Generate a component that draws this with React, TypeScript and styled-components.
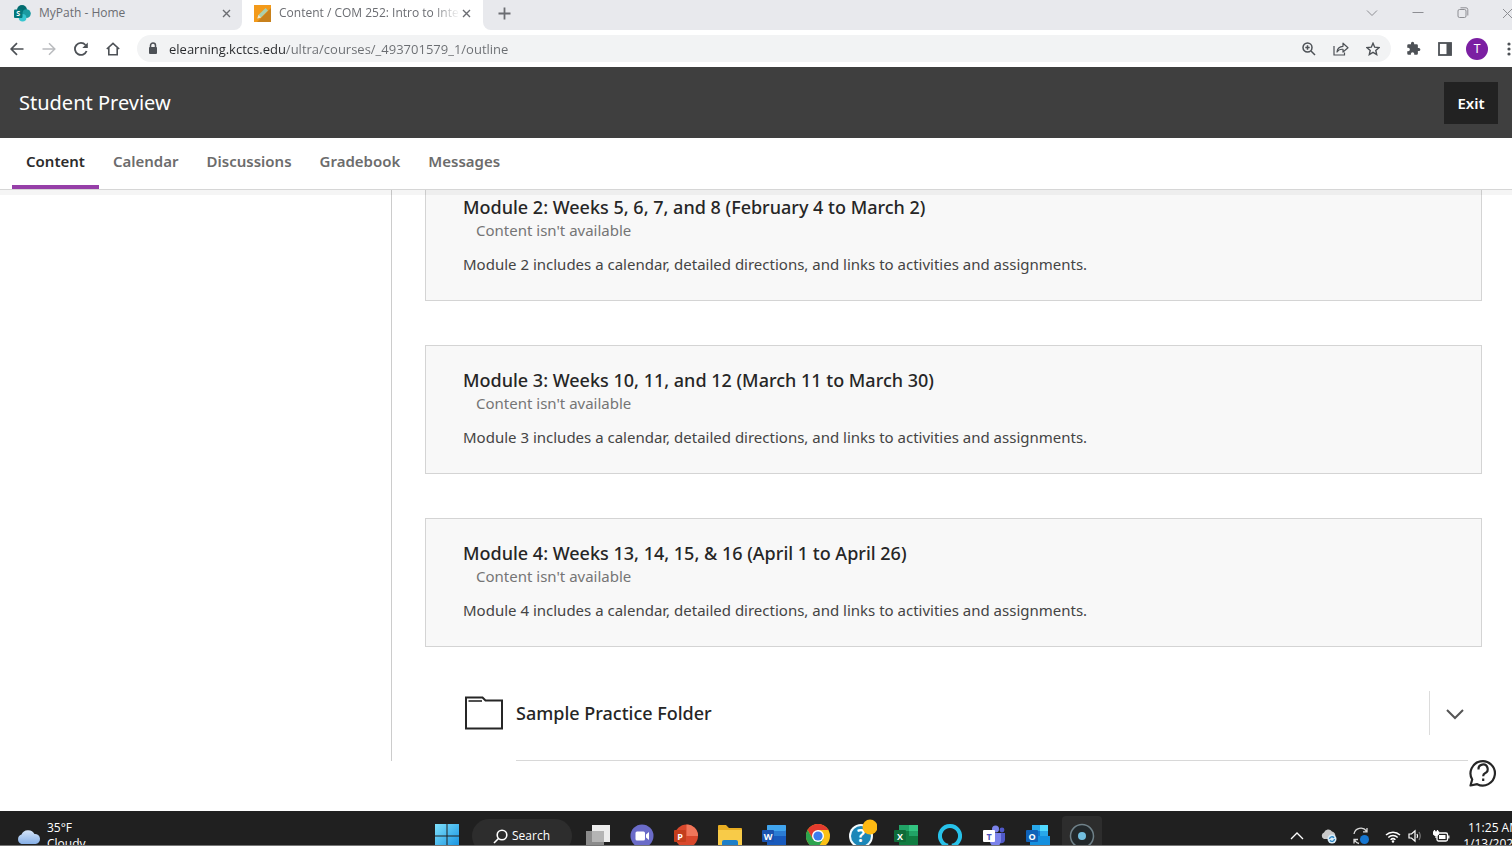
import React from "react";
import styled, { createGlobalStyle } from "styled-components";

const pageFont = '"Noto Sans", "Open Sans", sans-serif';
const systemFont = '"Open Sans", "Noto Sans", sans-serif';

const GlobalStyle = createGlobalStyle`
  * { box-sizing: border-box; }
  body { margin: 0; background: #fff; font-family: ${pageFont}; overflow: hidden; }
  h1, h2, p, ul { margin: 0; padding: 0; }
  ul { list-style: none; }
  button { border: 0; padding: 0; background: none; font: inherit; color: inherit; cursor: pointer; }
  svg { display: block; flex: none; }
`;

const Screen = styled.div`
  display: flex;
  flex-direction: column;
  height: 100vh;
  overflow: hidden;
`;

/* ---------- browser chrome ---------- */

const TabStrip = styled.div`
  display: flex;
  flex: none;
  height: 30px;
  background: #fff;
  color: #6b6d72;
  font-family: ${systemFont};
  font-size: 12px;
`;

const Tab = styled.div<{ $active?: boolean }>`
  display: flex;
  align-items: center;
  width: ${(p) => (p.$active ? 241 : 242)}px;
  height: 30px;
  padding: 0 11px 4px ${(p) => (p.$active ? 12 : 14)}px;
  background: ${(p) => (p.$active ? "#fff" : "#e8e9ed")};
  border-bottom-right-radius: ${(p) => (p.$active ? 0 : 8)}px;
`;

const TabTitle = styled.span<{ $fade?: boolean }>`
  flex: 1;
  min-width: 0;
  margin: 0 0 0 8px;
  overflow: hidden;
  white-space: nowrap;
  line-height: 16px;
  ${(p) => p.$fade && "mask-image: linear-gradient(to right, #000 85%, transparent);"}
`;

const StripRest = styled.div`
  display: flex;
  flex: 1;
  justify-content: space-between;
  align-items: center;
  min-width: 0;
  height: 30px;
  padding: 0 0 4px 12px;
  overflow: hidden;
  background: #e8e9ed;
  border-bottom-left-radius: 8px;
`;

const WindowControls = styled.div`
  display: flex;
  flex: none;
  margin-right: -18px;
  color: #8d8e93;
`;

const IconButton = styled.button<{ $w: number }>`
  display: flex;
  flex: none;
  align-items: center;
  justify-content: center;
  width: ${(p) => p.$w}px;
  height: 24px;
`;

const Toolbar = styled.div`
  display: flex;
  flex: none;
  align-items: center;
  height: 37px;
  padding-left: 1px;
  overflow: hidden;
  color: #4d5156;
  background: #fff;
`;

const AddressBar = styled.label`
  display: flex;
  flex: 1;
  align-items: center;
  min-width: 0;
  height: 27px;
  margin: 0 6px 0 8px;
  padding: 0 2px 0 10px;
  background: #f2f3f4;
  border-radius: 14px;
`;

const AddressInput = styled.input`
  flex: 1;
  min-width: 0;
  height: 24px;
  margin-left: 11px;
  padding: 0;
  border: 0;
  outline: 0;
  color: transparent;
  background: linear-gradient(to right, #26282b 117px, #6a6d71 117px);
  background-clip: text;
  font-family: ${systemFont};
  font-size: 13px;
`;

const ToolbarEnd = styled.div`
  display: flex;
  flex: none;
  margin-right: -13px;
`;

const Avatar = styled.span`
  display: flex;
  align-items: center;
  justify-content: center;
  width: 22px;
  height: 22px;
  border-radius: 50%;
  background: #7b1fa2;
  color: #fff;
  font-family: Roboto, sans-serif;
  font-size: 12px;
`;

/* ---------- course page ---------- */

const PreviewBar = styled.header`
  display: flex;
  flex: none;
  align-items: center;
  justify-content: space-between;
  height: 71px;
  padding: 0 14px 0 19px;
  background: #3f3f3f;
  color: #fff;
`;

const PreviewTitle = styled.h1`
  font-size: 20px;
  font-weight: 400;
  line-height: 28px;
`;

const ExitButton = styled.button`
  width: 54px;
  height: 42px;
  background: #222;
  font-size: 15px;
  font-weight: 600;
`;

const CourseNav = styled.nav`
  position: relative;
  z-index: 1;
  display: flex;
  flex: none;
  height: 52px;
  padding-left: 12px;
  background: #fff;
  border-bottom: 1px solid #d6d6d6;
  box-shadow: 0 5px 0 rgba(0, 0, 0, 0.04);
`;

const NavLink = styled.a<{ $active?: boolean }>`
  height: 51px;
  padding: 12px 14px 0;
  border-bottom: 4px solid ${(p) => (p.$active ? "#963fa8" : "transparent")};
  color: ${(p) => (p.$active ? "#2c2c2c" : "#6c6c6c")};
  font-size: 15px;
  font-weight: 600;
  line-height: 22px;
  text-decoration: none;
`;

const Main = styled.main`
  position: relative;
  flex: 1;
  min-height: 0;
  overflow: hidden;
  background: #fff;
`;

const Columns = styled.div`
  display: flex;
`;

const SidePanel = styled.aside`
  flex: none;
  width: 392px;
  border-right: 1px solid #ccc;
`;

const Outline = styled.ul`
  display: flex;
  flex: 1;
  flex-direction: column;
  gap: 44px;
  min-width: 0;
  margin-top: -18px;
  padding: 0 30px 0 33px;
`;

const ModuleCard = styled.li`
  padding: 22px 37px 24px;
  border: 1px solid #d4d4d4;
  background: #f8f8f8;
`;

const ItemTitle = styled.h2`
  color: #262626;
  font-size: 18px;
  font-weight: 500;
  line-height: 24px;
`;

const Availability = styled.p`
  padding-left: 13px;
  color: #757575;
  font-size: 15px;
  line-height: 22px;
`;

const Description = styled.p`
  margin-top: 11px;
  color: #444;
  font-size: 15px;
  line-height: 24px;
`;

const FolderRow = styled.li`
  display: flex;
  align-items: center;
  gap: 12px;
  margin-top: -26px;
  padding-left: 40px;
`;

const FolderBody = styled.div`
  display: flex;
  flex: 1;
  align-items: center;
  justify-content: space-between;
  height: 96px;
  border-bottom: 1px solid #d8d8d8;
`;

const ExpandButton = styled.button`
  display: flex;
  align-items: center;
  justify-content: center;
  width: 53px;
  height: 44px;
  padding: 2px 2px 0 0;
  border-left: 1px solid #dcdcdc;
`;

const HelpButton = styled.button`
  position: absolute;
  right: 14px;
  bottom: 23px;
  width: 30px;
  height: 30px;
  background: #fff;
`;

/* ---------- taskbar ---------- */

const Taskbar = styled.footer`
  flex: none;
  height: 35px;
  overflow: hidden;
  background: #202020;
  border-bottom: 1px solid #777;
  color: #fff;
  font-family: ${systemFont};
  font-size: 12px;
  line-height: 16px;
`;

const TaskbarRow = styled.div`
  display: grid;
  grid-template-columns: minmax(0, 1fr) auto minmax(0, 1fr);
  align-items: center;
  height: 50px;
  padding-left: 16px;
`;

const Weather = styled.div`
  display: flex;
  align-items: center;
  gap: 6px;
`;

const Apps = styled.div`
  display: flex;
  align-items: center;
`;

const AppButton = styled.button<{ $active?: boolean }>`
  display: flex;
  align-items: center;
  justify-content: center;
  width: 40px;
  height: 40px;
  margin: 0 2px;
  border-radius: 4px;
  background: ${(p) => (p.$active ? "#2d2d2d" : "transparent")};
`;

const SearchButton = styled.button`
  display: flex;
  align-items: center;
  justify-content: center;
  gap: 4px;
  width: 100px;
  height: 34px;
  margin: 0 4px 0 3px;
  border-radius: 17px;
  background: #2d2d2d;
`;

const Tray = styled.div`
  display: flex;
  align-items: center;
  justify-content: flex-end;
  overflow: hidden;
`;

const TraySlot = styled.span<{ $w: number }>`
  display: flex;
  flex: none;
  justify-content: center;
  width: ${(p) => p.$w}px;
`;

const Clock = styled.time`
  display: flex;
  flex: none;
  flex-direction: column;
  align-items: flex-end;
  margin: 0 -8px 0 2px;
  white-space: nowrap;
`;

/* ---------- drawings ---------- */

type LineIconProps = {
  w: number;
  h?: number;
  sw?: number;
  color?: string;
  children: React.ReactNode;
};

const LineIcon = ({ w, h = w, sw = 1.5, color = "currentColor", children }: LineIconProps) => (
  <svg width={w} height={h} viewBox={`0 0 ${w} ${h}`} fill="none" stroke={color} strokeWidth={sw} aria-hidden="true">
    {children}
  </svg>
);

const CloseIcon = ({ size = 9 }: { size?: number }) => (
  <LineIcon w={size} sw={1.4}>
    <path d={`M1 1 L${size - 1} ${size - 1} M${size - 1} 1 L1 ${size - 1}`} />
  </LineIcon>
);

const SharePointIcon = () => (
  <svg width="17" height="17" viewBox="0 0 17 17" aria-hidden="true">
    <circle cx="8" cy="5" r="5" fill="#036c70" />
    <circle cx="12.4" cy="8.6" r="4.4" fill="#1a9ba1" />
    <circle cx="8.6" cy="12.8" r="3.8" fill="#37c6d0" />
    <rect x="0" y="4.5" width="8.5" height="8.5" rx="1" fill="#03787c" />
    <text x="4.2" y="11.4" fontSize="7" fontWeight="700" textAnchor="middle" fill="#fff">S</text>
  </svg>
);

const CourseIcon = () => (
  <svg width="17" height="17" viewBox="0 0 17 17" aria-hidden="true">
    <rect width="17" height="17" fill="#f39a1a" />
    <path d="M17 3 V17 H3 Z" fill="#c8811c" />
    <path d="M3.4 13.6 L4.4 10 L11.6 3 L14 5.4 L7 12.6 Z" fill="#a9cfae" />
    <path d="M3.4 13.6 L4.4 10 L7 12.6 Z" fill="#f4e6c8" />
  </svg>
);

const CloudIcon = () => (
  <svg width="25" height="17" viewBox="0 0 24 17" aria-hidden="true">
    <defs>
      <linearGradient id="cloud" x1="0" y1="0" x2="0" y2="1">
        <stop offset="0" stopColor="#d5e4f8" />
        <stop offset="1" stopColor="#86b0e8" />
      </linearGradient>
    </defs>
    <path d="M5 16 A5 5 0 0 1 5 6.500 A7 6.500 0 0 1 18 6 A5 5 0 0 1 19 16 Z" fill="url(#cloud)" />
  </svg>
);

const WindowsIcon = () => (
  <svg width="24" height="24" viewBox="0 0 24 24" aria-hidden="true">
    <defs>
      <linearGradient id="win" x1="0" y1="0" x2="1" y2="1">
        <stop offset="0" stopColor="#7ee0fb" />
        <stop offset="1" stopColor="#1390e0" />
      </linearGradient>
    </defs>
    <path d="M0 0 H11.500 V11.500 H0 Z M12.500 0 H24 V11.500 H12.500 Z M0 12.500 H11.500 V24 H0 Z M12.500 12.500 H24 V24 H12.500 Z" fill="url(#win)" />
  </svg>
);

const TaskViewIcon = () => (
  <svg width="24" height="24" viewBox="0 0 24 24" aria-hidden="true">
    <rect x="6" y="1" width="18" height="17" fill="#ececec" />
    <rect x="0" y="7" width="18" height="17" fill="#8b8b8b" />
    <rect x="6" y="7" width="12" height="11" fill="#b4b4b4" />
  </svg>
);

const MeetIcon = () => (
  <svg width="24" height="24" viewBox="0 0 24 24" aria-hidden="true">
    <circle cx="12" cy="12" r="11.500" fill="#6a6bc8" />
    <rect x="5.500" y="7.500" width="9.500" height="9" rx="1.500" fill="#fff" />
    <path d="M16 10.500 L19 8 V16 L16 13.500 Z" fill="#fff" />
  </svg>
);

const PowerPointIcon = () => (
  <svg width="24" height="24" viewBox="0 0 24 24" aria-hidden="true">
    <circle cx="12.500" cy="12" r="11.500" fill="#d9482c" />
    <path d="M12.500 0.500 A11.500 11.500 0 0 1 24 12 H12.500 Z" fill="#f0765a" />
    <rect x="0" y="6" width="12" height="12" rx="1" fill="#c43e1c" />
    <text x="6" y="15.500" fontSize="9" fontWeight="700" textAnchor="middle" fill="#fff">P</text>
  </svg>
);

const ExplorerIcon = () => (
  <svg width="26" height="24" viewBox="0 0 26 24" aria-hidden="true">
    <path d="M1 2 Q1 1 2 1 H9 L12 4 H24 Q25 4 25 5 V22 H1 Z" fill="#e9ae22" />
    <path d="M1 6 H25 V23 H1 Z" fill="#f8cb48" />
    <path d="M5 23 V18 Q5 16 7 16 H19 Q21 16 21 18 V23 Z" fill="#1d7fc9" />
  </svg>
);

const WordIcon = () => (
  <svg width="24" height="24" viewBox="0 0 24 24" aria-hidden="true">
    <rect x="5" y="1" width="19" height="22" rx="1" fill="#185abd" />
    <rect x="5" y="1" width="19" height="6" rx="1" fill="#41a5ee" />
    <rect x="5" y="7" width="19" height="5" fill="#2b7cd3" />
    <rect x="0" y="6" width="12" height="12" rx="1" fill="#1a53b0" />
    <text x="6" y="15.500" fontSize="9" fontWeight="700" textAnchor="middle" fill="#fff">W</text>
  </svg>
);

const ChromeIcon = () => (
  <svg width="24" height="24" viewBox="0 0 24 24" aria-hidden="true">
    <circle cx="12" cy="12" r="12" fill="#fbc116" />
    <path d="M12 6 H22.400 A12 12 0 0 0 1.600 6 L6.800 15 Z" fill="#e33b2e" />
    <path d="M1.600 6 A12 12 0 0 0 12 24 L17.200 15 L12 12 L6.800 15 Z" fill="#2da44e" />
    <circle cx="12" cy="12" r="6" fill="#fff" />
    <circle cx="12" cy="12" r="4.600" fill="#3b7ded" />
  </svg>
);

const HelpAppIcon = () => (
  <svg width="30" height="34" viewBox="0 0 30 34" aria-hidden="true">
    <circle cx="14" cy="17" r="12" fill="#f4fbfe" />
    <circle cx="14" cy="17" r="10" fill="#1b87b8" />
    <text x="14" y="23" fontSize="17" fontWeight="700" textAnchor="middle" fill="#fff">?</text>
    <circle cx="23" cy="8" r="7.500" fill="#fdb913" />
  </svg>
);

const ExcelIcon = () => (
  <svg width="24" height="24" viewBox="0 0 24 24" aria-hidden="true">
    <rect x="5" y="1" width="19" height="22" rx="1" fill="#107c41" />
    <rect x="5" y="1" width="10" height="6" fill="#21a366" />
    <rect x="15" y="1" width="9" height="6" fill="#33c481" />
    <rect x="15" y="7" width="9" height="5" fill="#21a366" />
    <rect x="0" y="6" width="12" height="12" rx="1" fill="#0e6b38" />
    <text x="6" y="15.500" fontSize="9" fontWeight="700" textAnchor="middle" fill="#fff">X</text>
  </svg>
);

const AlexaIcon = () => (
  <svg width="24" height="24" viewBox="0 0 24 24" fill="none" aria-hidden="true">
    <path d="M10 21.800 A10 10 0 1 1 14 21.800" stroke="#27c2ea" strokeWidth="4" />
  </svg>
);

const TeamsIcon = () => (
  <svg width="24" height="24" viewBox="0 0 24 24" aria-hidden="true">
    <circle cx="13.500" cy="5" r="3.500" fill="#7b83eb" />
    <circle cx="20" cy="6" r="2.400" fill="#5059c9" />
    <path d="M15 9 H23 V16 Q22 20 18 19 Z" fill="#5059c9" />
    <path d="M8 9 H19 V17 Q18 23 13 23 Q9 22 8 18 Z" fill="#7b83eb" />
    <rect x="1" y="6" width="12" height="12" rx="1" fill="#fff" />
    <text x="7" y="15.500" fontSize="9" fontWeight="700" textAnchor="middle" fill="#4b53bc">T</text>
  </svg>
);

const OutlookIcon = () => (
  <svg width="24" height="24" viewBox="0 0 24 24" aria-hidden="true">
    <rect x="6" y="1" width="16" height="20" rx="1" fill="#0f78d4" />
    <rect x="6" y="1" width="8" height="6" fill="#28a8ea" />
    <rect x="14" y="1" width="8" height="6" fill="#50d9ff" />
    <rect x="14" y="7" width="8" height="6" fill="#28a8ea" />
    <path d="M4 12 L24 12 V23 H4 Z" fill="#1490df" />
    <rect x="0" y="6" width="12" height="12" rx="1" fill="#0f62b8" />
    <text x="6" y="15.500" fontSize="9" fontWeight="700" textAnchor="middle" fill="#fff">O</text>
  </svg>
);

const RecorderIcon = () => (
  <svg width="26" height="26" viewBox="0 0 26 26" aria-hidden="true">
    <circle cx="13" cy="13" r="11.500" fill="#22282b" stroke="#6f8189" strokeWidth="1.500" />
    <circle cx="13" cy="13" r="4" fill="#72bfe0" />
  </svg>
);

const FolderIcon = () => (
  <LineIcon w={39} h={35} sw={2} color="#262626">
    <path d="M1 1.500 H17.500 L20.500 4.500 H37 V32.500 H1 Z" />
    <path d="M3.500 5 H17" strokeWidth={1.6} />
  </LineIcon>
);

const HelpIcon = () => (
  <LineIcon w={30} sw={2.2} color="#262626">
    <path d="M2.500 27.500 L4.200 21.500 A12.200 12.200 0 1 1 9.200 26.200 Z" strokeLinejoin="round" />
    <path d="M10.500 11.500 A4.600 4.600 0 1 1 17 15.300 Q15.200 16.200 15.200 18.200" />
    <path d="M15.200 20.500 V23" />
  </LineIcon>
);

/* ---------- page data ---------- */

const modules = [
  { n: 2, title: "Module 2: Weeks 5, 6, 7, and 8 (February 4 to March 2)" },
  { n: 3, title: "Module 3: Weeks 10, 11, and 12 (March 11 to March 30)" },
  { n: 4, title: "Module 4: Weeks 13, 14, 15, & 16 (April 1 to April 26)" },
];

const navItems = ["Content", "Calendar", "Discussions", "Gradebook", "Messages"];

const pinnedApps = [
  { name: "Task view", Icon: TaskViewIcon },
  { name: "Chat", Icon: MeetIcon },
  { name: "PowerPoint", Icon: PowerPointIcon },
  { name: "File Explorer", Icon: ExplorerIcon },
  { name: "Word", Icon: WordIcon },
  { name: "Chrome", Icon: ChromeIcon },
  { name: "Help", Icon: HelpAppIcon },
  { name: "Excel", Icon: ExcelIcon },
  { name: "Alexa", Icon: AlexaIcon },
  { name: "Teams", Icon: TeamsIcon },
  { name: "Outlook", Icon: OutlookIcon },
  { name: "Recorder", Icon: RecorderIcon, active: true },
];

const BrowserTabs = () => (
  <TabStrip>
    <Tab>
      <SharePointIcon />
      <TabTitle>MyPath - Home</TabTitle>
      <IconButton $w={10} aria-label="Close MyPath tab"><CloseIcon /></IconButton>
    </Tab>
    <Tab $active>
      <CourseIcon />
      <TabTitle $fade>Content / COM 252: Intro to Inte</TabTitle>
      <IconButton $w={12} aria-label="Close Content tab"><CloseIcon /></IconButton>
    </Tab>
    <StripRest>
      <IconButton $w={18} aria-label="New tab">
        <LineIcon w={13} sw={1.8}><path d="M6.500 0.500 V12.500 M0.500 6.500 H12.500" /></LineIcon>
      </IconButton>
      <WindowControls>
        <IconButton $w={46} aria-label="Search tabs">
          <LineIcon w={12} h={8} sw={1}><path d="M1 1.500 L6 6.500 L11 1.500" /></LineIcon>
        </IconButton>
        <IconButton $w={45} aria-label="Minimize">
          <LineIcon w={12} sw={1}><path d="M0.500 5.500 H11.500" /></LineIcon>
        </IconButton>
        <IconButton $w={45} aria-label="Restore">
          <LineIcon w={12} sw={1}>
            <rect x="1" y="2.500" width="8" height="8" rx="1.500" />
            <path d="M3.500 0.800 H9 Q10.800 0.800 10.800 2.600 V8.500" />
          </LineIcon>
        </IconButton>
        <IconButton $w={45} aria-label="Close window">
          <LineIcon w={11} sw={1}><path d="M1 1 L10 10 M10 1 L1 10" /></LineIcon>
        </IconButton>
      </WindowControls>
    </StripRest>
  </TabStrip>
);

const BrowserToolbar = () => (
  <Toolbar>
    <IconButton $w={32} aria-label="Back">
      <LineIcon w={14} sw={1.7}><path d="M13.500 7 H1.500 M7 1.200 L1.200 7 L7 12.800" /></LineIcon>
    </IconButton>
    <IconButton $w={32} aria-label="Forward">
      <LineIcon w={14} sw={1.5} color="#b9bbbe"><path d="M0.500 7 H12.500 M7 1.200 L12.800 7 L7 12.800" /></LineIcon>
    </IconButton>
    <IconButton $w={32} aria-label="Reload">
      <LineIcon w={14} sw={1.8}>
        <path d="M12.600 9 A6 6 0 1 1 11.500 3" />
        <path d="M13.800 0.500 V6 H8.300 Z" fill="currentColor" stroke="none" />
      </LineIcon>
    </IconButton>
    <IconButton $w={32} aria-label="Home">
      <LineIcon w={14} sw={1.6}><path d="M0.800 7 L7 1.400 L13.200 7 M2.800 5.500 V12.800 H11.200 V5.500" /></LineIcon>
    </IconButton>
    <AddressBar>
      <LineIcon w={11} h={13} sw={1.5}>
        <path d="M3.500 6 V3.500 A2.500 2.500 0 0 1 8.500 3.500 V6" />
        <rect x="2" y="5" width="8" height="7" rx="1" fill="currentColor" stroke="none" />
      </LineIcon>
      <AddressInput aria-label="Address" defaultValue="elearning.kctcs.edu/ultra/courses/_493701579_1/outline" />
      <IconButton $w={32} aria-label="Zoom">
        <LineIcon w={14}>
          <circle cx="5.500" cy="5.500" r="4.500" />
          <path d="M9 9 L13 13 M3.300 5.500 H7.700 M5.500 3.300 V7.700" />
        </LineIcon>
      </IconButton>
      <IconButton $w={32} aria-label="Share">
        <LineIcon w={16} h={14} sw={1.2}>
          <path d="M1 4 V13 H11.500 V10.500" />
          <path d="M4 10 Q4.500 4.500 10 4.300 V1.200 L15 5.800 L10 10 V7.300 Q6 7 4 10 Z" strokeLinejoin="round" />
        </LineIcon>
      </IconButton>
      <IconButton $w={32} aria-label="Bookmark">
        <LineIcon w={14} sw={1.4}>
          <path d="M7 1.300 L8.700 5.200 L13 5.600 L9.800 8.400 L10.700 12.600 L7 10.400 L3.300 12.600 L4.200 8.400 L1 5.600 L5.300 5.200 Z" />
        </LineIcon>
      </IconButton>
    </AddressBar>
    <ToolbarEnd>
      <IconButton $w={32} aria-label="Extensions">
        <svg width="15" height="15" viewBox="0 0 24 24" fill="currentColor" aria-hidden="true">
          <path d="M20.500 11 H19 V7 a2 2 0 0 0 -2 -2 h-4 V3.500 a2.500 2.500 0 0 0 -5 0 V5 H4 a2 2 0 0 0 -2 2 v3.800 h1.500 a2.700 2.700 0 0 1 0 5.400 H2 V20 a2 2 0 0 0 2 2 h3.800 v-1.500 a2.700 2.700 0 0 1 5.400 0 V22 H17 a2 2 0 0 0 2 -2 v-4 h1.500 a2.500 2.500 0 0 0 0 -5 Z" />
        </svg>
      </IconButton>
      <IconButton $w={32} aria-label="Side panel">
        <LineIcon w={14} sw={1.8}>
          <rect x="1" y="1" width="12" height="12" />
          <rect x="8.500" y="1" width="5" height="12" fill="currentColor" stroke="none" />
        </LineIcon>
      </IconButton>
      <IconButton $w={32} aria-label="Profile"><Avatar>T</Avatar></IconButton>
      <IconButton $w={32} aria-label="Menu">
        <svg width="4" height="14" viewBox="0 0 4 14" fill="currentColor" aria-hidden="true">
          <circle cx="2" cy="2" r="1.600" />
          <circle cx="2" cy="7" r="1.600" />
          <circle cx="2" cy="12" r="1.600" />
        </svg>
      </IconButton>
    </ToolbarEnd>
  </Toolbar>
);

const SystemTaskbar = () => (
  <Taskbar>
    <TaskbarRow>
      <Weather>
        <CloudIcon />
        <div>
          <div>35°F</div>
          <div>Cloudy</div>
        </div>
      </Weather>
      <Apps>
        <AppButton aria-label="Start"><WindowsIcon /></AppButton>
        <SearchButton>
          <LineIcon w={15} sw={1.6}>
            <circle cx="9" cy="6" r="4.800" />
            <path d="M5.500 9.500 L1 14" />
          </LineIcon>
          Search
        </SearchButton>
        {pinnedApps.map(({ name, Icon, active }) => (
          <AppButton key={name} $active={active} aria-label={name}><Icon /></AppButton>
        ))}
      </Apps>
      <Tray>
        <TraySlot $w={32}>
          <LineIcon w={14} h={8} sw={1.3}><path d="M1 7 L7 1 L13 7" /></LineIcon>
        </TraySlot>
        <TraySlot $w={32}>
          <svg width="18" height="16" viewBox="0 0 18 16" aria-hidden="true">
            <path d="M4 11 A3.500 3.500 0 0 1 4 4.500 A4.500 4.500 0 0 1 12 3.500 A4 4 0 0 1 15 9 L12 11 Z" fill="#c9c9c9" />
            <circle cx="12" cy="11" r="4.500" fill="#d9ecf8" />
            <path d="M9.500 11 A2.500 2.500 0 0 1 14 9.800 M14.500 11 A2.500 2.500 0 0 1 10 12.400" fill="none" stroke="#2c86c4" strokeWidth="1.300" />
          </svg>
        </TraySlot>
        <TraySlot $w={32}>
          <svg width="18" height="18" viewBox="0 0 18 18" fill="none" stroke="#d8d8d8" strokeWidth="1.300" aria-hidden="true">
            <path d="M2 7 A7 7 0 0 1 14.500 4 M15 1 V4.800 H11" />
            <path d="M7 16.500 A7 7 0 0 1 2.500 13 M2 16.500 V12.500 H6" />
            <circle cx="12.500" cy="12.500" r="4.500" fill="#1677d2" stroke="none" />
          </svg>
        </TraySlot>
        <TraySlot $w={32}>
          <LineIcon w={16} h={13} sw={1.5}>
            <path d="M1 5 A10 10 0 0 1 15 5 M3.300 7.500 A6.700 6.700 0 0 1 12.700 7.500 M5.600 9.800 A3.400 3.400 0 0 1 10.400 9.800" />
            <circle cx="8" cy="11.500" r="1.200" fill="currentColor" stroke="none" />
          </LineIcon>
        </TraySlot>
        <TraySlot $w={13}>
          <LineIcon w={15} h={14} sw={1.2}>
            <path d="M1 5 H3.500 L7 1.800 V12.200 L3.500 9 H1 Z" />
            <path d="M9 5 Q10.200 7 9 9" />
            <path d="M11 3 Q13.500 7 11 11" stroke="#777" />
          </LineIcon>
        </TraySlot>
        <TraySlot $w={39}>
          <LineIcon w={17} h={14} sw={1.3}>
            <rect x="4" y="4" width="10.500" height="8" rx="1.500" />
            <rect x="6" y="6" width="6.500" height="4" fill="currentColor" stroke="none" />
            <path d="M15.800 6.500 V9.500 M1.500 1 V3 M4.500 1 V3" />
            <path d="M0.500 3 H5.500 V5 Q3 8 0.500 5 Z M3 6 V9" fill="currentColor" />
          </LineIcon>
        </TraySlot>
        <Clock>
          <span>11:25 AM</span>
          <span>1/13/2024</span>
        </Clock>
      </Tray>
    </TaskbarRow>
  </Taskbar>
);

export default function App() {
  return (
    <Screen>
      <GlobalStyle />
      <BrowserTabs />
      <BrowserToolbar />
      <PreviewBar>
        <PreviewTitle>Student Preview</PreviewTitle>
        <ExitButton>Exit</ExitButton>
      </PreviewBar>
      <CourseNav>
        {navItems.map((item, i) => (
          <NavLink key={item} href="#" $active={i === 0}>{item}</NavLink>
        ))}
      </CourseNav>
      <Main>
        <Columns>
          <SidePanel />
          <Outline>
            {modules.map(({ n, title }) => (
              <ModuleCard key={n}>
                <ItemTitle>{title}</ItemTitle>
                <Availability>Content isn't available</Availability>
                <Description>
                  Module {n} includes a calendar, detailed directions, and links to activities and assignments.
                </Description>
              </ModuleCard>
            ))}
            <FolderRow>
              <FolderIcon />
              <FolderBody>
                <ItemTitle>Sample Practice Folder</ItemTitle>
                <ExpandButton aria-label="Expand folder">
                  <LineIcon w={20} h={12} sw={2} color="#555"><path d="M2 2 L10 10 L18 2" /></LineIcon>
                </ExpandButton>
              </FolderBody>
            </FolderRow>
          </Outline>
        </Columns>
        <HelpButton aria-label="Help"><HelpIcon /></HelpButton>
      </Main>
      <SystemTaskbar />
    </Screen>
  );
}
